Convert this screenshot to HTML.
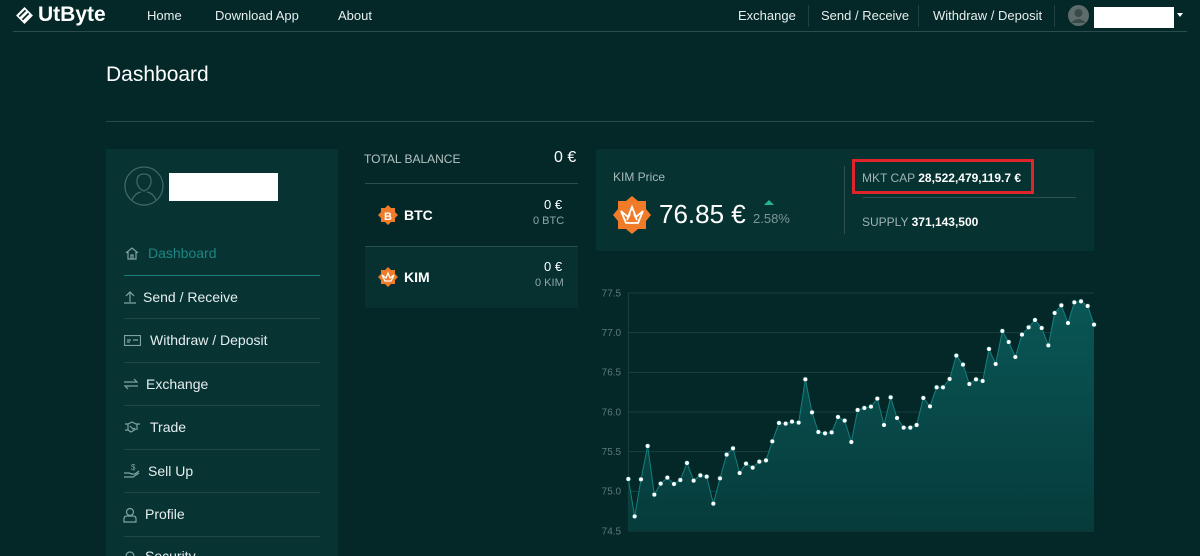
<!DOCTYPE html>
<html style="overflow:hidden;width:1200px;height:556px"><head><meta charset="utf-8"><style>
*{margin:0;padding:0;box-sizing:border-box}
body{width:1200px;height:556px;overflow:hidden;background:#032827;font-family:"Liberation Sans",sans-serif;color:#e6eeee;position:relative}
.a{position:absolute;white-space:nowrap}
.nav{font-size:13px;color:#e8eeee}
.sep{position:absolute;width:1px;background:#1d4443}
.side{position:absolute;left:106px;top:149px;width:232px;height:407px;background:#073333}
.mi{position:absolute;left:124px;width:196px;height:1px;background:#1f4948}
.ml{position:absolute;font-size:14px;color:#e6eeee}
.ic{position:absolute;stroke:#7fa3a2;fill:none;stroke-width:1.2}
</style></head><body>
<svg class="a" style="left:15px;top:6px" width="19" height="19" viewBox="0 0 18 18"><path d="M9 1 L17 9 L9 17 L1 9Z" fill="#fff"/><path d="M4 10 L10 4 M7 13 L13 7" stroke="#032827" stroke-width="1.6"/></svg>
<div class="a" style="left:38px;top:3px;font-size:21px;font-weight:bold;color:#fff">UtByte</div>
<div class="a nav" style="left:147px;top:8px">Home</div>
<div class="a nav" style="left:215px;top:8px">Download App</div>
<div class="a nav" style="left:338px;top:8px">About</div>
<div class="a nav" style="left:738px;top:8px">Exchange</div>
<div class="sep" style="left:808px;top:5px;height:22px"></div>
<div class="a nav" style="left:821px;top:8px">Send / Receive</div>
<div class="sep" style="left:918px;top:5px;height:22px"></div>
<div class="a nav" style="left:933px;top:8px">Withdraw / Deposit</div>
<div class="sep" style="left:1054px;top:5px;height:22px"></div>
<svg class="a" style="left:1068px;top:5px" width="21" height="21"><circle cx="10.5" cy="10.5" r="10.5" fill="#5d6b6b"/><circle cx="10.5" cy="8" r="4" fill="#3a4a4a"/><path d="M3 18 Q10.5 10 18 18" fill="#3a4a4a"/></svg>
<div class="a" style="left:1094px;top:7px;width:80px;height:21px;background:#fff"></div>
<div class="a" style="left:1177px;top:13px;width:0;height:0;border-left:3px solid transparent;border-right:3px solid transparent;border-top:4px solid #fff"></div>
<div class="a" style="left:13px;top:31px;width:1174px;height:1px;background:#2a4c4c"></div>
<div class="a" style="left:106px;top:63px;font-size:21px;color:#fff">Dashboard</div>
<div class="a" style="left:106px;top:121px;width:988px;height:1px;background:#2a4c4c"></div>
<div class="side"></div>
<svg class="a" style="left:124px;top:166px" width="40" height="40"><circle cx="20" cy="20" r="19" fill="none" stroke="#3e6766" stroke-width="1.3"/><path d="M13 15 Q13 8 20 8 Q27 8 27 15 Q27 22 20 25 Q13 22 13 15Z M8 34 Q11 27 17 26 M32 34 Q29 27 23 26" fill="none" stroke="#3e6766" stroke-width="1.3"/></svg>
<div class="a" style="left:169px;top:173px;width:109px;height:28px;background:#fff"></div>
<svg class="ic" style="left:125px;top:247px" width="14" height="13"><path d="M1 6 L7 1 L13 6 M3 5 V12 H11 V5 M6 12 V8 H8 V12"/></svg>
<div class="ml" style="left:148px;top:245px;color:#1c8682">Dashboard</div>
<div class="mi" style="top:275px;background:#1d7d7a"></div>
<svg class="ic" style="left:124px;top:290px" width="12" height="14"><path d="M6 12 V2 M2 6 L6 2 L10 6 M0 13 H12"/></svg>
<div class="ml" style="left:143px;top:289px">Send / Receive</div>
<div class="mi" style="top:318px"></div>
<svg class="ic" style="left:124px;top:335px" width="17" height="11"><rect x="0.5" y="0.5" width="16" height="10"/><path d="M3 5 H7 M9 5 H14 M3 7 H6"/></svg>
<div class="ml" style="left:150px;top:332px">Withdraw / Deposit</div>
<div class="mi" style="top:362px"></div>
<svg class="ic" style="left:124px;top:378px" width="14" height="12"><path d="M0 4 H13 L10 1 M14 8 H1 L4 11"/></svg>
<div class="ml" style="left:146px;top:376px">Exchange</div>
<div class="mi" style="top:405px"></div>
<svg class="ic" style="left:124px;top:421px" width="17" height="12"><path d="M1 3 H4 L8 1 L12 3 H16 M1 9 H4 L7 11 L12 8 M4 3 V9 M13 3 V9 M6 5 L9 8 L11 7"/></svg>
<div class="ml" style="left:150px;top:419px">Trade</div>
<div class="mi" style="top:449px"></div>
<svg class="ic" style="left:123px;top:462px" width="17" height="16"><path d="M1 11 H6 L9 12 H12 L16 9 M1 15 H10 L16 11"/><text x="8" y="8" font-size="8" fill="#7fa3a2" stroke="none">$</text></svg>
<div class="ml" style="left:148px;top:463px">Sell Up</div>
<div class="mi" style="top:492px"></div>
<svg class="ic" style="left:123px;top:507px" width="14" height="16"><circle cx="7" cy="5" r="3.5"/><path d="M1 15 V12 Q1 9 4 9 H10 Q13 9 13 12 V15Z"/></svg>
<div class="ml" style="left:145px;top:506px">Profile</div>
<div class="mi" style="top:536px"></div>
<svg class="ic" style="left:123px;top:550px" width="14" height="10"><circle cx="7" cy="6" r="4"/></svg>
<div class="ml" style="left:145px;top:548px">Security</div>
<div class="a" style="left:364px;top:152px;font-size:12px;color:#b5c4c3">TOTAL BALANCE</div>
<div class="a" style="left:554px;top:149px;font-size:16px;color:#fff">0 €</div>
<div class="a" style="left:365px;top:183px;width:213px;height:1px;background:#2a4f4f"></div>
<div class="a" style="left:365px;top:246px;width:213px;height:62px;background:#063130;border-top:1px solid #2a4f4f"></div>
<svg class="a" style="left:378px;top:205px" width="20" height="20"><path d="M10 0 L13 3 L17 3 L17 7 L20 10 L17 13 L17 17 L13 17 L10 20 L7 17 L3 17 L3 13 L0 10 L3 7 L3 3 L7 3Z" fill="#f07c2a"/><text x="6" y="15" font-size="11" font-weight="bold" fill="#fff">B</text></svg>
<div class="a" style="left:404px;top:207px;font-size:14px;font-weight:bold;color:#fff">BTC</div>
<div class="a" style="left:544px;top:197px;font-size:13px;color:#fff">0 €</div>
<div class="a" style="left:533px;top:215px;font-size:11px;color:#8ea7a6">0 BTC</div>
<svg class="a" style="left:378px;top:267px" width="20" height="20"><path d="M10 0 L13 3 L17 3 L17 7 L20 10 L17 13 L17 17 L13 17 L10 20 L7 17 L3 17 L3 13 L0 10 L3 7 L3 3 L7 3Z" fill="#f07c2a"/><path d="M4 8 L7 14 H13 L16 8 L12 11 L10 6 L8 11Z" fill="none" stroke="#fff" stroke-width="1.2"/></svg>
<div class="a" style="left:404px;top:269px;font-size:14px;font-weight:bold;color:#fff">KIM</div>
<div class="a" style="left:544px;top:259px;font-size:13px;color:#fff">0 €</div>
<div class="a" style="left:535px;top:277px;font-size:11px;color:#8ea7a6">0 KIM</div>
<div class="a" style="left:596px;top:149px;width:498px;height:102px;background:#073232"></div>
<div class="a" style="left:613px;top:170px;font-size:12px;color:#a8bbba">KIM Price</div>
<svg class="a" style="left:613px;top:196px" width="38" height="38"><path d="M19 0 L25 5 L33 5 L33 13 L38 19 L33 25 L33 33 L25 33 L19 38 L13 33 L5 33 L5 25 L0 19 L5 13 L5 5 L13 5Z" fill="#f07c2a"/><path d="M8 15 L13 27 H25 L30 15 L23 21 L19 11 L15 21Z M14 24 L17 18 M24 24 L21 18" fill="none" stroke="#fff" stroke-width="1.8"/></svg>
<div class="a" style="left:659px;top:199px;font-size:26px;color:#fff">76.85 €</div>
<div class="a" style="left:764px;top:200px;width:0;height:0;border-left:5px solid transparent;border-right:5px solid transparent;border-bottom:5px solid #27b48e"></div>
<div class="a" style="left:753px;top:211px;font-size:13px;color:#7d9695">2.58%</div>
<div class="a" style="left:844px;top:166px;width:1px;height:68px;background:#2d5150"></div>
<div class="a" style="left:852px;top:159px;width:182px;height:35px;border:3px solid #e0242b"></div>
<div class="a" style="left:862px;top:171px;font-size:12px;color:#9fb3b2">MKT CAP <span style="color:#fff;font-weight:bold;font-size:12px">28,522,479,119.7 €</span></div>
<div class="a" style="left:863px;top:197px;width:213px;height:1px;background:#2d5150"></div>
<div class="a" style="left:862px;top:215px;font-size:12px;color:#9fb3b2">SUPPLY <span style="color:#fff;font-weight:bold">371,143,500</span></div>
<svg class="a" style="left:590px;top:280px" width="510" height="276" viewBox="0 0 1530 828">
<defs><linearGradient id="g" x1="0" y1="0" x2="0" y2="1"><stop offset="0" stop-color="#0a5656"/><stop offset="1" stop-color="#063b3b"/></linearGradient></defs>
<g stroke="#17403f" stroke-width="3"><line x1="115" y1="39" x2="1512" y2="39"/><line x1="115" y1="158" x2="1512" y2="158"/><line x1="115" y1="277" x2="1512" y2="277"/><line x1="115" y1="396" x2="1512" y2="396"/><line x1="115" y1="515" x2="1512" y2="515"/><line x1="115" y1="634" x2="1512" y2="634"/><line x1="115" y1="753" x2="1512" y2="753"/><line x1="115" y1="39" x2="115" y2="753"/></g>
<g fill="#5f7a79" font-size="30" font-family="Liberation Sans"><text x="35" y="49">77.5</text><text x="35" y="168">77.0</text><text x="35" y="287">76.5</text><text x="35" y="406">76.0</text><text x="35" y="525">75.5</text><text x="35" y="644">75.0</text><text x="35" y="763">74.5</text></g>
<path id="p" d="M115,597 L134,709 L153,598 L173,498 L193,644 L212,611 L232,593 L252,612 L271,600 L291,549 L311,602 L331,586 L350,590 L370,671 L390,595 L410,524 L429,505 L449,579 L468,551 L488,563 L508,545 L528,541 L547,484 L567,429 L587,431 L606,425 L626,428 L646,298 L666,397 L685,456 L705,460 L725,457 L744,411 L764,422 L784,486 L803,390 L823,384 L843,380 L862,356 L882,435 L902,352 L921,414 L941,443 L961,443 L980,435 L1000,354 L1020,379 L1040,322 L1059,322 L1079,297 L1099,227 L1119,254 L1138,312 L1158,298 L1178,303 L1197,207 L1217,252 L1237,153 L1256,186 L1276,231 L1296,164 L1316,142 L1335,120 L1355,144 L1375,196 L1394,99 L1414,76 L1434,129 L1453,67 L1473,64 L1493,78 L1512,134" fill="none"/>
<path d="M115,597 L134,709 L153,598 L173,498 L193,644 L212,611 L232,593 L252,612 L271,600 L291,549 L311,602 L331,586 L350,590 L370,671 L390,595 L410,524 L429,505 L449,579 L468,551 L488,563 L508,545 L528,541 L547,484 L567,429 L587,431 L606,425 L626,428 L646,298 L666,397 L685,456 L705,460 L725,457 L744,411 L764,422 L784,486 L803,390 L823,384 L843,380 L862,356 L882,435 L902,352 L921,414 L941,443 L961,443 L980,435 L1000,354 L1020,379 L1040,322 L1059,322 L1079,297 L1099,227 L1119,254 L1138,312 L1158,298 L1178,303 L1197,207 L1217,252 L1237,153 L1256,186 L1276,231 L1296,164 L1316,142 L1335,120 L1355,144 L1375,196 L1394,99 L1414,76 L1434,129 L1453,67 L1473,64 L1493,78 L1512,134 L1512,753 L115,753Z" fill="url(#g)"/>
<use href="#p" stroke="#158080" stroke-width="3"/>
<g fill="#fff" stroke="#0d5b5a" stroke-width="2">
<circle cx="115" cy="597" r="7"/><circle cx="134" cy="709" r="7"/><circle cx="153" cy="598" r="7"/><circle cx="173" cy="498" r="7"/><circle cx="193" cy="644" r="7"/><circle cx="212" cy="611" r="7"/><circle cx="232" cy="593" r="7"/><circle cx="252" cy="612" r="7"/><circle cx="271" cy="600" r="7"/><circle cx="291" cy="549" r="7"/><circle cx="311" cy="602" r="7"/><circle cx="331" cy="586" r="7"/><circle cx="350" cy="590" r="7"/><circle cx="370" cy="671" r="7"/><circle cx="390" cy="595" r="7"/><circle cx="410" cy="524" r="7"/><circle cx="429" cy="505" r="7"/><circle cx="449" cy="579" r="7"/><circle cx="468" cy="551" r="7"/><circle cx="488" cy="563" r="7"/><circle cx="508" cy="545" r="7"/><circle cx="528" cy="541" r="7"/><circle cx="547" cy="484" r="7"/><circle cx="567" cy="429" r="7"/><circle cx="587" cy="431" r="7"/><circle cx="606" cy="425" r="7"/><circle cx="626" cy="428" r="7"/><circle cx="646" cy="298" r="7"/><circle cx="666" cy="397" r="7"/><circle cx="685" cy="456" r="7"/><circle cx="705" cy="460" r="7"/><circle cx="725" cy="457" r="7"/><circle cx="744" cy="411" r="7"/><circle cx="764" cy="422" r="7"/><circle cx="784" cy="486" r="7"/><circle cx="803" cy="390" r="7"/><circle cx="823" cy="384" r="7"/><circle cx="843" cy="380" r="7"/><circle cx="862" cy="356" r="7"/><circle cx="882" cy="435" r="7"/><circle cx="902" cy="352" r="7"/><circle cx="921" cy="414" r="7"/><circle cx="941" cy="443" r="7"/><circle cx="961" cy="443" r="7"/><circle cx="980" cy="435" r="7"/><circle cx="1000" cy="354" r="7"/><circle cx="1020" cy="379" r="7"/><circle cx="1040" cy="322" r="7"/><circle cx="1059" cy="322" r="7"/><circle cx="1079" cy="297" r="7"/><circle cx="1099" cy="227" r="7"/><circle cx="1119" cy="254" r="7"/><circle cx="1138" cy="312" r="7"/><circle cx="1158" cy="298" r="7"/><circle cx="1178" cy="303" r="7"/><circle cx="1197" cy="207" r="7"/><circle cx="1217" cy="252" r="7"/><circle cx="1237" cy="153" r="7"/><circle cx="1256" cy="186" r="7"/><circle cx="1276" cy="231" r="7"/><circle cx="1296" cy="164" r="7"/><circle cx="1316" cy="142" r="7"/><circle cx="1335" cy="120" r="7"/><circle cx="1355" cy="144" r="7"/><circle cx="1375" cy="196" r="7"/><circle cx="1394" cy="99" r="7"/><circle cx="1414" cy="76" r="7"/><circle cx="1434" cy="129" r="7"/><circle cx="1453" cy="67" r="7"/><circle cx="1473" cy="64" r="7"/><circle cx="1493" cy="78" r="7"/><circle cx="1512" cy="134" r="7"/>
</g>
</svg>
</body></html>
